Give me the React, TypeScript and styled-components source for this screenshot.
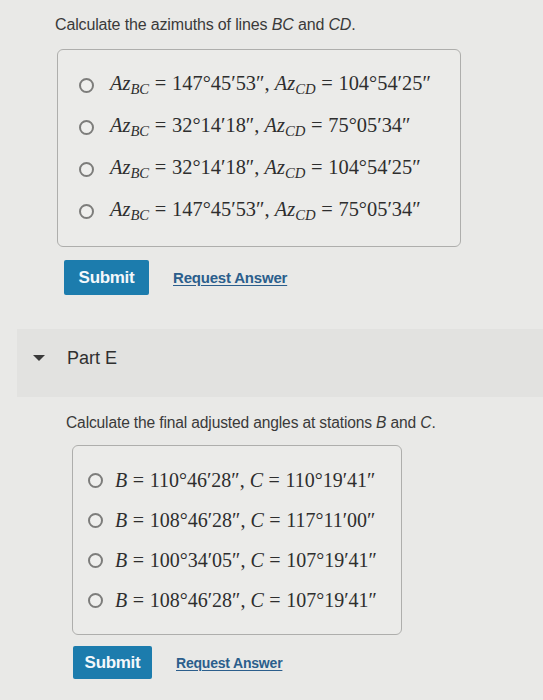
import styled, { createGlobalStyle } from 'styled-components';

const GlobalStyle = createGlobalStyle`
  html, body {
    margin: 0;
    padding: 0;
    background: #e9e9e7;
    font-family: "Liberation Sans", Arial, sans-serif;
    color: #333;
  }
`;

const Page = styled.div`
  width: 543px;
  height: 700px;
  overflow: hidden;
  padding-top: 15px;
  box-sizing: border-box;
`;

const Section = styled.div<{ $indent: number; $top?: number }>`
  padding-left: ${p => p.$indent}px;
  margin-top: ${p => p.$top ?? 0}px;
`;

const Prompt = styled.p<{ $size: number }>`
  margin: 0;
  font-size: ${p => p.$size}px;
  line-height: 20px;
  letter-spacing: -0.15px;
  color: #3a3a3a;
`;

const Var = styled.i`
  font-style: italic;
`;

const OptionBox = styled.div<{ $width: number; $row: number; $top: number; $left: number }>`
  width: ${p => p.$width}px;
  box-sizing: border-box;
  margin: ${p => p.$top}px 0 0 ${p => p.$left}px;
  border: 1px solid #aeaeac;
  border-radius: 6px;
  background: #ebebe9;
  padding: 14px 0 14px ${p => p.$row}px;
`;

const Option = styled.label<{ $h: number; $gap: number }>`
  display: flex;
  align-items: center;
  height: ${p => p.$h}px;
  gap: ${p => p.$gap}px;
  cursor: pointer;
`;

const Radio = styled.span`
  width: 15px;
  height: 15px;
  border: 2px solid #7d7d7b;
  border-radius: 50%;
  box-sizing: border-box;
  background: #efefed;
  flex-shrink: 0;
`;

const Math = styled.span<{ $size: number }>`
  font-family: "Liberation Serif", "Times New Roman", serif;
  font-size: ${p => p.$size}px;
  color: #2e2e2e;
  white-space: nowrap;
`;

const MathVar = styled.span`
  font-style: italic;
`;

const Sub = styled.sub`
  font-style: italic;
  font-size: 0.72em;
  vertical-align: -0.28em;
`;

const Eq = styled.span`
  margin: 0 0.28em;
`;

const Actions = styled.div<{ $top: number; $gap: number; $left: number }>`
  display: flex;
  align-items: center;
  gap: ${p => p.$gap}px;
  margin: ${p => p.$top}px 0 0 ${p => p.$left}px;
`;

const SubmitButton = styled.button<{ $w: number; $h: number }>`
  width: ${p => p.$w}px;
  height: ${p => p.$h}px;
  border: none;
  border-radius: 2px;
  background: #1c7cad;
  color: #f4f8fb;
  font-family: "Liberation Sans", Arial, sans-serif;
  font-weight: bold;
  font-size: 17px;
  letter-spacing: -0.3px;
  cursor: pointer;
`;

const RequestLink = styled.a<{ $size: number }>`
  color: #2b5e8c;
  font-size: ${p => p.$size}px;
  font-weight: bold;
  letter-spacing: -0.2px;
  text-decoration: underline;
  text-underline-offset: 2px;
  cursor: pointer;
`;

const PartHeader = styled.div`
  margin: 34px 0 0 17px;
  height: 68px;
  box-sizing: border-box;
  padding: 0 0 10px 16px;
  background: #e2e2e0;
  display: flex;
  align-items: center;
  gap: 22px;
`;

const Caret = styled.span`
  width: 0;
  height: 0;
  border-left: 6px solid transparent;
  border-right: 6px solid transparent;
  border-top: 6px solid #3a3a3a;
`;

const PartTitle = styled.span`
  font-size: 18px;
  color: #303030;
`;

const azOptions = [
  ['147°45′53″', '104°54′25″'],
  ['32°14′18″', '75°05′34″'],
  ['32°14′18″', '104°54′25″'],
  ['147°45′53″', '75°05′34″'],
];

const angleOptions = [
  ['110°46′28″', '110°19′41″'],
  ['108°46′28″', '117°11′00″'],
  ['100°34′05″', '107°19′41″'],
  ['108°46′28″', '107°19′41″'],
];

const Az = ({ sub }: { sub: string }) => (
  <>
    <MathVar>Az</MathVar>
    <Sub>{sub}</Sub>
  </>
);

export default function App() {
  return (
    <Page>
      <GlobalStyle />
      <Section $indent={55}>
        <Prompt $size={16}>
          Calculate the azimuths of lines <Var>BC</Var> and <Var>CD</Var>.
        </Prompt>
        <OptionBox $width={404} $row={21} $top={14} $left={2}>
          {azOptions.map(([bc, cd]) => (
            <Option key={bc + cd} $h={42} $gap={16}>
              <Radio />
              <Math $size={20.4}>
                <Az sub="BC" />
                <Eq>=</Eq>
                {bc}, <Az sub="CD" />
                <Eq>=</Eq>
                {cd}
              </Math>
            </Option>
          ))}
        </OptionBox>
        <Actions $top={13} $gap={24} $left={9}>
          <SubmitButton $w={85} $h={35}>Submit</SubmitButton>
          <RequestLink $size={15}>Request Answer</RequestLink>
        </Actions>
      </Section>

      <PartHeader>
        <Caret />
        <PartTitle>Part E</PartTitle>
      </PartHeader>

      <Section $indent={66} $top={16}>
        <Prompt $size={15.6}>
          Calculate the final adjusted angles at stations <Var>B</Var> and <Var>C</Var>.
        </Prompt>
        <OptionBox $width={330} $row={15} $top={12} $left={6}>
          {angleOptions.map(([b, c]) => (
            <Option key={b + c} $h={40} $gap={12}>
              <Radio />
              <Math $size={20}>
                <MathVar>B</MathVar>
                <Eq>=</Eq>
                {b}, <MathVar>C</MathVar>
                <Eq>=</Eq>
                {c}
              </Math>
            </Option>
          ))}
        </OptionBox>
        <Actions $top={11} $gap={24} $left={7}>
          <SubmitButton $w={79} $h={33}>Submit</SubmitButton>
          <RequestLink $size={14}>Request Answer</RequestLink>
        </Actions>
      </Section>
    </Page>
  );
}
